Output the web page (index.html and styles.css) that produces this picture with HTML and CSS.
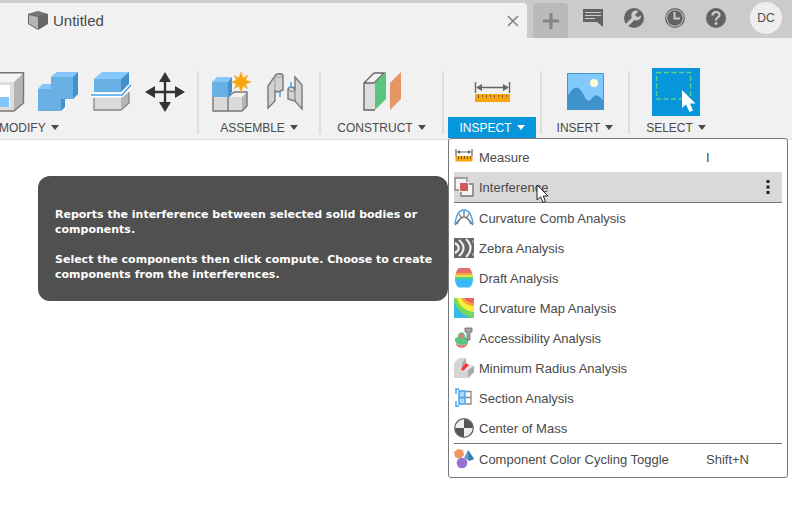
FILE: index.html
```
<!DOCTYPE html>
<html lang="en">
<head>
<meta charset="UTF-8">
<title>Untitled</title>
<link rel="stylesheet" href="styles.css">
</head>
<body>
<header class="tabbar">
  <div class="tab">
    <svg class="tab-icon" width="20" height="20" viewBox="0 0 20 20">
      <path d="M0 3 10 0 20 3V13L10 19 0 13Z" fill="#666"/>
      <path d="M1 4 10 6V18L1 12.500Z" fill="#b5b5b5"/>
      <path d="M1 3 10 1 19 3 10 5Z" fill="#777"/>
    </svg>
    <span class="tab-title">Untitled</span>
    <button class="tab-close" aria-label="Close">
      <svg width="12" height="12" viewBox="0 0 12 12"><path d="M1 1 11 11M11 1 1 11" stroke="#858585" stroke-width="1.600"/></svg>
    </button>
  </div>
  <button class="tab-add" aria-label="New tab">
    <svg width="18" height="18" viewBox="0 0 18 18"><path d="M9 1V17M1 9H17" stroke="#858585" stroke-width="3"/></svg>
  </button>
  <nav class="tools">
    <button class="tool" aria-label="Comments">
      <svg width="22" height="20" viewBox="0 0 22 20">
        <path d="M1 1H21V19L15 14H1Z" fill="#636363"/>
        <path d="M3 4.500H19M3 7.500H19M3 10.500H13" stroke="#ccc" stroke-width="1.200"/>
      </svg>
    </button>
    <button class="tool" aria-label="Extensions">
      <svg width="22" height="22" viewBox="0 0 22 22">
        <circle cx="11" cy="11" r="10" fill="#636363"/>
        <path d="M5 17 11 11" stroke="#ccc" stroke-width="3.500" stroke-linecap="round"/>
        <path d="M15.500 4A5 5 0 1 0 18.200 8.500L14.500 10.300 12 8Z" fill="#ccc"/>
      </svg>
    </button>
    <button class="tool" aria-label="Job status">
      <svg width="22" height="22" viewBox="0 0 22 22">
        <circle cx="11" cy="11" r="9.300" fill="none" stroke="#636363" stroke-width="1.200"/>
        <circle cx="11" cy="11" r="7.800" fill="#636363"/>
        <path d="M10.500 5V11.500H16" fill="none" stroke="#ccc" stroke-width="2"/>
      </svg>
    </button>
    <button class="tool" aria-label="Help">
      <svg width="22" height="22" viewBox="0 0 22 22">
        <circle cx="11" cy="11" r="10" fill="#636363"/>
        <path d="M7.500 8.500C7.500 3.800 14.500 4 14.500 8C14.500 10.500 11 10.500 11 13.500" fill="none" stroke="#ccc" stroke-width="2.200"/>
        <circle cx="11" cy="16.500" r="1.400" fill="#ccc"/>
      </svg>
    </button>
  </nav>
  <button class="avatar">DC</button>
</header>

<div class="toolbar">
  <div class="group group-modify">
    <div class="icons">
      <!-- shell -->
      <svg width="40" height="40" viewBox="0 0 40 40">
        <path d="M0 1H40.500L31 10H0Z" fill="#f4f4f4"/>
        <path d="M0 10H31V39H0Z" fill="#ddd"/>
        <path d="M31 10 40.500 1V31L31 39Z" fill="#b5b5b5"/>
        <path d="M0 13H27V35H0Z" fill="#fff"/>
        <path d="M0 25H26V35H0Z" fill="#82c6fb"/>
        <path d="M0 .7H40.500V31L31 39H0" fill="none" stroke="#777" stroke-width="1.400"/>
      </svg>
      <!-- combine -->
      <svg width="40" height="40" viewBox="0 0 40 40">
        <path d="M1 17 6 12H14V5L20 0H41L36 5V27H24V39H1Z" fill="#69b0e5"/>
        <path d="M14 5 20 0H41L36 5ZM1 17 6 12H14V17Z" fill="#85c7fa"/>
        <path d="M36 5 41 0V22L36 27ZM24 27H28V35L24 39Z" fill="#4391cb"/>
      </svg>
      <!-- split body -->
      <svg width="40" height="40" viewBox="0 0 40 40">
        <path d="M3 7H30V20H3Z" fill="#69b0e5"/>
        <path d="M3 7 11 0H38L30 7Z" fill="#85c7fa"/>
        <path d="M30 7 38 0V12L30 20Z" fill="#4391cb"/>
        <path d="M3 26H30V38H3Z" fill="#dadada"/>
        <path d="M30 26 38 20V31L30 38Z" fill="#b5b5b5"/>
        <path d="M3 26V38H30L38 31V20" fill="none" stroke="#888" stroke-width="1.300"/>
        <path d="M0 23H31L40 13" fill="none" stroke="#fff" stroke-width="4"/>
        <path d="M0 23H31L40 13" fill="none" stroke="#3ea2f0" stroke-width="1.500"/>
      </svg>
      <!-- move -->
      <svg width="40" height="40" viewBox="0 0 40 40">
        <path d="M20 6V34M6 20H34" stroke="#333" stroke-width="2.400"/>
        <path d="M20 0 26 10H14ZM20 40 14 30H26ZM0 20 10 14V26ZM40 20 30 26V14Z" fill="#333"/>
      </svg>
    </div>
    <button class="group-label">MODIFY<span class="caret"></span></button>
  </div>
  <span class="sep"></span>

  <div class="group group-assemble">
    <div class="icons">
      <!-- new component -->
      <svg width="40" height="40" viewBox="0 0 40 40">
        <path d="M1 25H30V39H1Z" fill="#dadada"/>
        <path d="M16 25 20 20H35L30 25Z" fill="#f2f2f2"/>
        <path d="M30 25 35 20V34L30 39Z" fill="#b5b5b5"/>
        <path d="M1 25V39H30L35 34V20H22L16 25V39" fill="none" stroke="#777" stroke-width="1.400"/>
        <path d="M0 10H16V25H0Z" fill="#69b0e5"/>
        <path d="M0 10 5 5H20L16 10Z" fill="#85c7fa"/>
        <path d="M16 10 20 5V20L16 25Z" fill="#4391cb"/>
        <path d="M29 0 31.200 6 36 3 33.500 8 39 10 33.500 12 36 17 31.200 14 29 20 26.800 14 22 17 24.500 12 19 10 24.500 8 22 3 26.800 6Z" fill="#f9a50f" stroke="#f9a50f" stroke-width=".4"/>
      </svg>
      <!-- joint -->
      <svg width="40" height="40" viewBox="0 0 40 40">
        <path d="M2 14 9 4C10 1 17 1 17 4V18L12 20 9 19V29L2 36Z" fill="#d2d2d2" stroke="#777" stroke-width="1.400"/>
        <path d="M9 4V19M10 4C12 6 15 6 17 4" fill="none" stroke="#999"/>
        <path d="M29 5 36 13V37L29 29 22 27V17C23 14 28 14 29 18Z" fill="#d2d2d2" stroke="#777" stroke-width="1.400"/>
        <path d="M29 18V29M22 17C24 20 28 20 29 18" fill="none" stroke="#777"/>
        <path d="M14 19V25M25 10V16" stroke="#3ea2f0" stroke-width="1.500"/>
      </svg>
    </div>
    <button class="group-label">ASSEMBLE<span class="caret"></span></button>
  </div>
  <span class="sep"></span>

  <div class="group group-construct">
    <div class="icons">
      <svg width="40" height="40" viewBox="0 0 40 40">
        <path d="M2 11 12 1H24L13 11V38H2Z" fill="#f4f4f4"/>
        <path d="M2 11H13V38H2Z" fill="#ddd"/>
        <path d="M13 38H2V11L12 1H23M2 11H12L22 1" fill="none" stroke="#666" stroke-width="1.400"/>
        <path d="M13 11 24 0V27L13 38Z" fill="#57c57d"/>
        <path d="M28 11 39 0V27L28 38Z" fill="#e49762"/>
      </svg>
    </div>
    <button class="group-label">CONSTRUCT<span class="caret"></span></button>
  </div>
  <span class="sep"></span>

  <div class="group group-inspect">
    <div class="icons">
      <svg width="40" height="40" viewBox="0 0 40 40">
        <path d="M3.500 10V21M37.500 10V21M6 15.500H35" stroke="#666" stroke-width="1.400"/>
        <path d="M4 15.500 10 12V19ZM37 15.500 31 12V19Z" fill="#666"/>
        <path d="M3 22H38V30H3Z" fill="#f9a50f"/>
        <path d="M6.500 23V26M10.500 23V25M14.500 23V26M18.500 23V25M22.500 23V26M26.500 23V25M30.500 23V26M34.500 23V25" stroke="#805a16"/>
      </svg>
    </div>
    <button class="group-label active" aria-expanded="true">INSPECT<span class="caret"></span></button>

    <ul class="menu">
      <li class="item">
        <svg width="20" height="20" viewBox="0 0 20 20">
          <path d="M2 2V9M18 2V9M3 5H17" stroke="#666" stroke-width="1.200"/>
          <path d="M3 5 6 3V7ZM17 5 14 3V7Z" fill="#666"/>
          <path d="M1.500 9H18.500V14.500H1.500Z" fill="#f9a50f"/>
          <path d="M4.500 9V12M7.500 9V12M10.500 9V12M13.500 9V12M16.500 9V12" stroke="#805a16"/>
        </svg>
        <button class="item-name">Measure</button>
        <kbd class="key">I</kbd>
      </li>
      <li class="item selected">
        <svg width="20" height="20" viewBox="0 0 20 20">
          <path d="M1 1H13V13H1Z" fill="#f3f3f3" stroke="#888" stroke-width="1.400"/>
          <path d="M7 7H19V19H7Z" fill="#f3f3f3" stroke="#777" stroke-width="1.400"/>
          <path d="M5 5H15V15H5Z" fill="#f3f3f3"/>
          <path d="M6 6H14V14H6Z" fill="#cf5a5c"/>
        </svg>
        <button class="item-name" aria-describedby="tip">Interference</button>
        <button class="more" aria-label="More">
          <svg width="4" height="16" viewBox="0 0 4 16"><path d="M.5 1H3.500V4H.5ZM.5 6.500H3.500V9.500H.5ZM.5 12H3.500V15H.5Z" fill="#222"/></svg>
        </button>
        <div class="tooltip" id="tip" role="tooltip">
          <p>Reports the interference between selected solid bodies or components.</p>
          <p>Select the components then click compute. Choose to create components from the interferences.</p>
        </div>
        <svg class="cursor" width="13" height="20" viewBox="0 0 13 20">
          <path d="M1 1V16L4.500 12.800 7 18.500 9.500 17.300 7.200 12H12Z" fill="#fff" stroke="#222"/>
        </svg>
      </li>
      <li class="line"></li>
      <li class="item">
        <svg width="20" height="20" viewBox="0 0 20 20">
          <path d="M3 16C5 11 7 9 10 9S15 11 17 16M5 6 7.500 10M15 6 12.500 10M10 2V9M1 17 5 12M19 17 15 12" fill="none" stroke="#777" stroke-width="1.300"/>
          <path d="M1 16C2 8 5 2 10 2S18 8 19 16" fill="none" stroke="#3ea2f0" stroke-width="1.400"/>
        </svg>
        <button class="item-name">Curvature Comb Analysis</button>
      </li>
      <li class="item">
        <svg width="20" height="20" viewBox="0 0 20 20">
          <path d="M0 0H20V20H0Z" fill="#666"/>
          <path d="M1 5C6 8 6 12 1 15M5 2C11 7 11 13 5 18M12 1C18 7 18 13 12 19" fill="none" stroke="#eee" stroke-width="2.200"/>
          <path d="M19 2V5M19 15V18" stroke="#ccc"/>
        </svg>
        <button class="item-name">Zebra Analysis</button>
      </li>
      <li class="item">
        <svg width="20" height="20" viewBox="0 0 20 20">
          <path d="M5 0H15C17 1 18 4 18 6H2C2 4 3 1 5 0Z" fill="#e56f70"/>
          <path d="M2 5H18L19 8H1Z" fill="#f9a33a"/>
          <path d="M1 7H19V10H1Z" fill="#e8e450"/>
          <path d="M1 9H19V12H1Z" fill="#52d291"/>
          <path d="M1 11.500H19C19 15 17 19 15 19.500H5C3 19 1 15 1 11.500Z" fill="#36b8fa"/>
        </svg>
        <button class="item-name">Draft Analysis</button>
      </li>
      <li class="item">
        <svg width="20" height="20" viewBox="0 0 20 20">
          <path d="M0 0H20V20H0Z" fill="#e8635f"/>
          <path d="M0 0H10C12 3 16 5 20 5V20H0Z" fill="#f9a33a"/>
          <path d="M0 0H7C9 5 14 8 20 8V20H0Z" fill="#f7ef37"/>
          <path d="M0 0H3C4 7 11 13 20 14V20H0Z" fill="#72d85e"/>
          <path d="M0 4C3 12 9 17 17 20H0Z" fill="#39b9e8"/>
        </svg>
        <button class="item-name">Curvature Map Analysis</button>
      </li>
      <li class="item">
        <svg width="20" height="20" viewBox="0 0 20 20">
          <path d="M2 15C5 18 11 18 14 14C14 21 2 22 2 15Z" fill="#e67777"/>
          <path d="M1 13C0 9 4 10 4 8C4 3 11 3 11 8C11 10 15 10 14 14C12 18 3 18 1 13Z" fill="#5cc481"/>
          <circle cx="7.500" cy="8" r="2.200" fill="#e67777"/>
          <path d="M11 0H18V4H16V12H13V4H11Z" fill="#a5a5a5" stroke="#666" stroke-width=".8"/>
        </svg>
        <button class="item-name">Accessibility Analysis</button>
      </li>
      <li class="item">
        <svg width="20" height="20" viewBox="0 0 20 20">
          <path d="M0 5 5 0H12V6L20 8V14L14 20H0Z" fill="#d5d5d5"/>
          <path d="M8 5 12 0V6L8 11Z" fill="#aaa"/>
          <path d="M8 11 12 6 20 8 14 12Z" fill="#e4e4e4"/>
          <path d="M14 12 20 8V14L14 20Z" fill="#aaa"/>
          <path d="M7 11 12 5 15 7 9 13Z" fill="#ff3030"/>
        </svg>
        <button class="item-name">Minimum Radius Analysis</button>
      </li>
      <li class="item">
        <svg width="20" height="20" viewBox="0 0 20 20">
          <path d="M5 3H11V16H5Z" fill="#a9dafa"/>
          <path d="M5 1H2V6M2 13V18H5M5 3H11V16H5ZM5 9.500H11" fill="none" stroke="#3ea2f0" stroke-width="1.400"/>
          <path d="M12 3.500H17V16H12M12 9.500H17" fill="none" stroke="#888" stroke-width="1.300"/>
        </svg>
        <button class="item-name">Section Analysis</button>
      </li>
      <li class="item">
        <svg width="20" height="20" viewBox="0 0 20 20">
          <circle cx="10" cy="10" r="9.300" fill="#eee" stroke="#666" stroke-width="1.300"/>
          <path d="M10 10V1A9 9 0 0 1 19 10ZM10 10V19A9 9 0 0 1 1 10Z" fill="#555"/>
        </svg>
        <button class="item-name">Center of Mass</button>
      </li>
      <li class="line"></li>
      <li class="item">
        <svg width="20" height="20" viewBox="0 0 20 20">
          <path d="M0 3 4 0 9 1 10 6 6 10 1 8Z" fill="#eb9961"/>
          <path d="M14 1 20 10 15 12 10 9Z" fill="#5c9ed0"/>
          <path d="M14 1 20 10 15 12Z" fill="#397aaa"/>
          <circle cx="8" cy="14" r="5.300" fill="#9870d3"/>
        </svg>
        <button class="item-name">Component Color Cycling Toggle</button>
        <kbd class="key">Shift+N</kbd>
      </li>
    </ul>
  </div>
  <span class="sep"></span>

  <div class="group group-insert">
    <div class="icons">
      <svg width="40" height="40" viewBox="0 0 40 40">
        <path d="M2 1H39V38H2Z" fill="#82cafd"/>
        <path d="M2 25C10 11 14 13 21 27C26 33 28 20 33 24C36 25 37 28 39 29V38H2Z" fill="#3f93cd"/>
        <circle cx="29" cy="11" r="4" fill="#fffad0"/>
        <path d="M2.500 1.500H38.500V37.500H2.500Z" fill="none" stroke="#4794c9"/>
      </svg>
    </div>
    <button class="group-label">INSERT<span class="caret"></span></button>
  </div>
  <span class="sep"></span>

  <div class="group group-select">
    <div class="icons">
      <svg width="48" height="48" viewBox="0 0 48 48">
        <path d="M0 0H48V48H0Z" fill="#0796db"/>
        <path d="M4.500 4.500H38.500V31H4.500Z" fill="none" stroke="#5bd38a" stroke-width="1.400" stroke-dasharray="5 2.500"/>
        <path d="M30 22V40L34 36.500 37.500 44 41 42.500 38 35.500H43.500Z" fill="#fff"/>
      </svg>
    </div>
    <button class="group-label">SELECT<span class="caret"></span></button>
  </div>
</div>
</body>
</html>
```
FILE: styles.css
```
* {
  box-sizing: border-box;
}
body {
  margin: 0;
  min-height: 100vh;
  font-family: "Liberation Sans", Arial, sans-serif;
  background-color: #fff;
  color: #4a4a4a;
}
button {
  margin: 0;
  padding: 0;
  border: none;
  background: none;
  font-family: inherit;
  color: inherit;
  cursor: pointer;
}
svg {
  display: block;
  flex: none;
  overflow: visible;
}

/* document tabs */
.tabbar {
  display: flex;
  height: 38px;
  padding-top: 3px;
  background-color: #cbcbcb;
}
.tab {
  display: flex;
  flex: 1;
  align-items: center;
  padding: 0 8px 0 28px;
  background-color: #f1f1f1;
  border-top-right-radius: 4px;
}
.tab-title {
  flex: 1;
  margin-left: 5px;
  font-size: 15px;
}
.tab-add {
  display: flex;
  align-items: center;
  justify-content: center;
  width: 35px;
  margin-left: 6px;
  background-color: #bababa;
  border-radius: 4px 4px 0 0;
}
.tools {
  display: flex;
  gap: 19px;
  margin-left: 14px;
  padding-top: 4px;
}
.tool {
  display: flex;
  align-items: center;
  height: 22px;
}
.avatar {
  width: 32px;
  height: 32px;
  margin: -1px 10px 0 23px;
  border-radius: 50%;
  background-color: #eee;
  font-size: 12px;
}

/* ribbon */
.toolbar {
  display: flex;
  margin-left: -17px;
  padding-top: 30px;
  padding-bottom: 1px;
  background-color: #f1f1f1;
  border-bottom: 1px solid #ddd;
}
.group {
  position: relative;
  display: flex;
  flex-direction: column;
  align-items: center;
}
.group-modify {
  align-items: flex-start;
  width: 214px;
}
.group-modify .group-label {
  margin-left: 16px;
}
.group-assemble {
  width: 120px;
}
.group-construct {
  width: 121px;
}
.group-inspect {
  width: 96px;
}
.group-insert {
  width: 86px;
}
.group-select {
  width: 92px;
}
.icons {
  display: flex;
  align-items: center;
  gap: 14px;
  height: 48px;
}
.group-label {
  display: flex;
  align-items: center;
  height: 21px;
  margin-top: 1px;
  font-size: 12px;
}
.group-label.active {
  justify-content: center;
  width: 88px;
  background-color: #0796db;
  color: #fff;
}
.caret {
  margin-left: 5px;
  border: 4px solid transparent;
  border-top: 5px solid currentColor;
  border-bottom: 0;
}
.sep {
  width: 2px;
  margin: 3px 0 4px;
  background-color: #dedede;
}

/* inspect menu */
.menu {
  position: absolute;
  top: 70px;
  left: 4px;
  z-index: 1;
  width: 340px;
  margin: 0;
  padding: 3px 5px;
  list-style: none;
  background-color: #fff;
  border: 1px solid #777;
  border-radius: 3px;
}
.item {
  position: relative;
  display: flex;
  align-items: center;
  height: 30px;
  font-size: 13px;
}
.selected {
  background-color: #d9d9d9;
}
.item-name {
  flex: 1;
  margin-left: 5px;
  font-size: 13px;
  text-align: left;
}
.key {
  width: 76px;
  font-family: inherit;
  font-size: 13px;
}
.more {
  margin-right: 12px;
}
.line {
  height: 1px;
  background-color: #777;
}
.cursor {
  position: absolute;
  top: 12px;
  left: 82px;
}
.tooltip {
  position: absolute;
  top: 4px;
  right: calc(100% + 6px);
  width: 410px;
  padding: 31px 8px 19px 17px;
  border-radius: 12px;
  background-color: #505050;
  color: #fff;
  font-family: "DejaVu Sans", Verdana, sans-serif;
  font-size: 11px;
  font-weight: bold;
  line-height: 15px;
}
.tooltip p {
  margin: 0;
}
.tooltip p + p {
  margin-top: 15px;
}
```
